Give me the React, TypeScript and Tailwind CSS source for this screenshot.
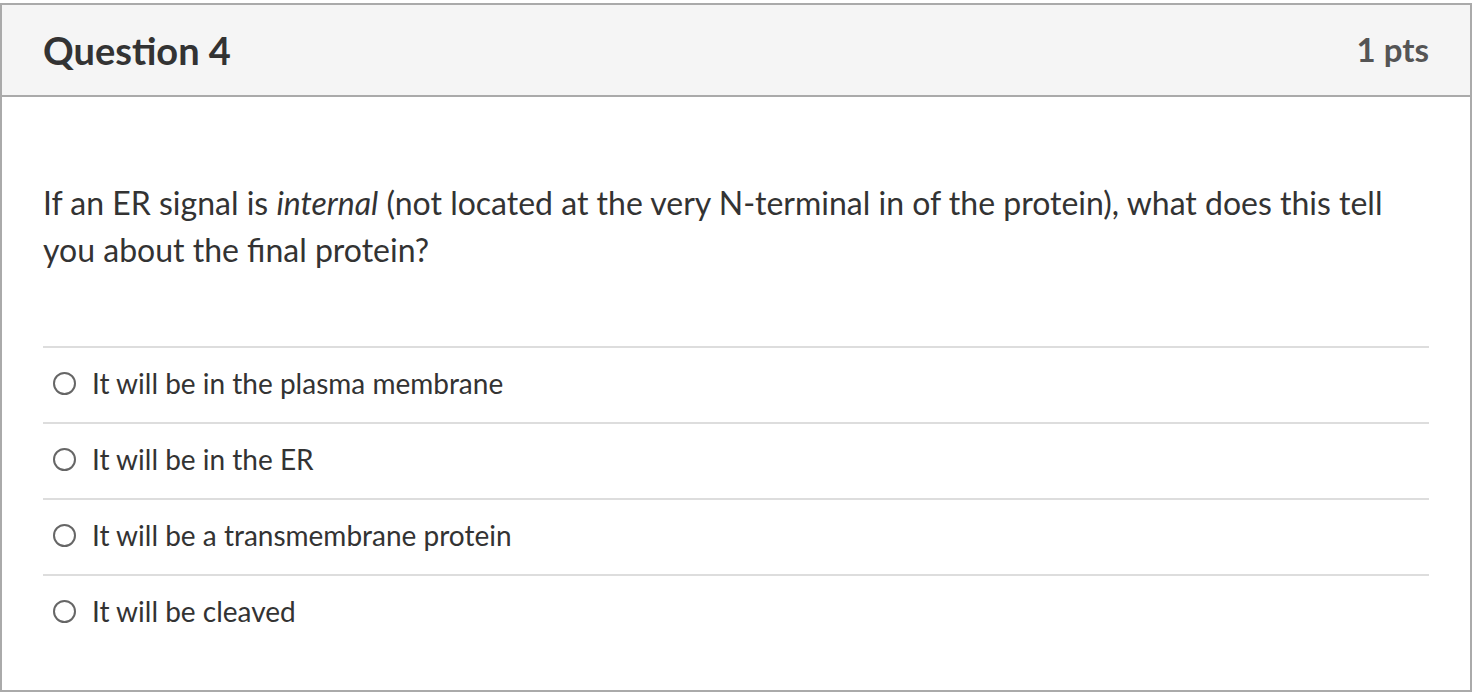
import React from 'react';

const answers = [
  'It will be in the plasma membrane',
  'It will be in the ER',
  'It will be a transmembrane protein',
  'It will be cleaved',
];

const App: React.FC = () => {
  return (
    <div className="min-h-screen bg-white pt-[3px]" style={{ fontFamily: 'Lato, "Noto Sans", sans-serif' }}>
      <div className="h-[689px] border-2 border-[#aaaaaa] bg-white">
        <div className="flex h-[92px] items-center justify-between border-b-2 border-[#aaaaaa] bg-[#f5f5f5] pl-[41px] pr-[41px]">
          <h2 className="text-[38px] font-bold text-[#333333]">Question 4</h2>
          <div className="text-[33px] font-bold text-[#555555]">1 pts</div>
        </div>
        <div className="px-[41px]">
          <p className="pt-[82px] text-[32px] leading-[47px] text-[#333333]">
            If an ER signal is <em>internal</em> (not located at the very N-terminal in of the protein), what does this tell you about the final protein?
          </p>
          <div className="mt-[73px]">
            {answers.map((a) => (
              <div key={a} className="flex h-[76px] items-center border-t-2 border-[#dddddd] pb-[4px] pl-[10px]">
                <span className="mr-[16px] h-[23px] w-[23px] rounded-full border-2 border-[#666666] bg-white" />
                <span className="text-[28px] text-[#333333]">{a}</span>
              </div>
            ))}
          </div>
        </div>
      </div>
    </div>
  );
};

export default App;
